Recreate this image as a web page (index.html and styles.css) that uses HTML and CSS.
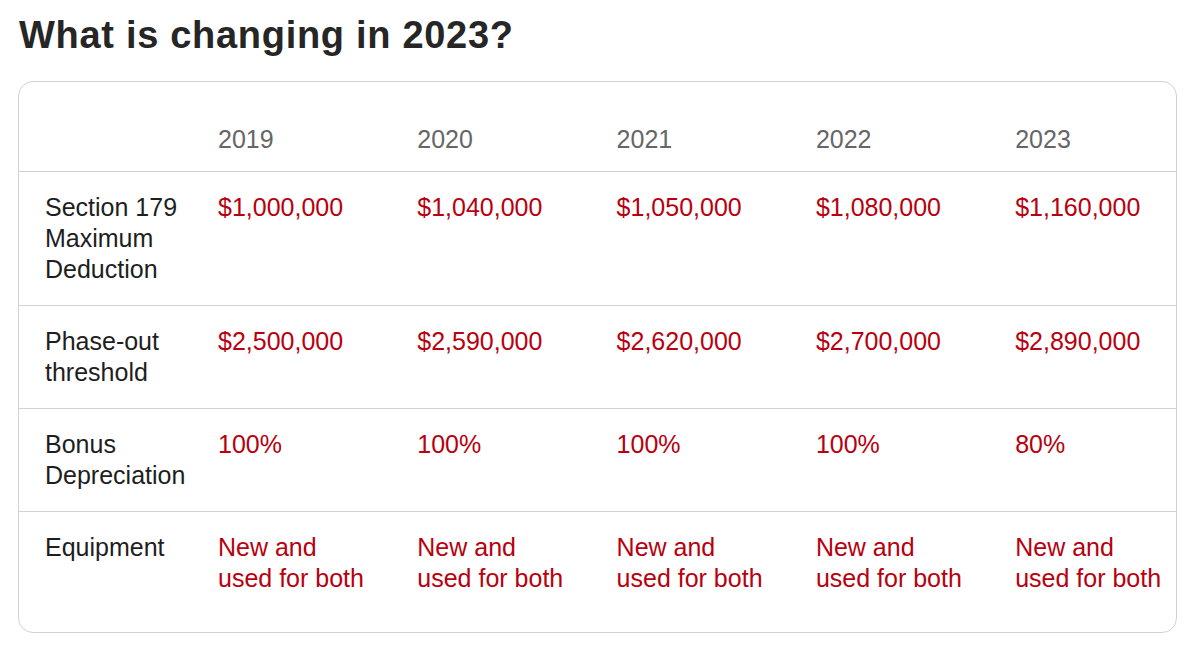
FILE: index.html
```html
<!DOCTYPE html>
<html lang="en">
<head>
<meta charset="utf-8">
<title>What is changing in 2023?</title>
<link rel="stylesheet" href="styles.css">
</head>
<body>
<main class="page">
  <h1 class="title">What is changing in 2023?</h1>
  <div class="card">
    <div class="row head">
      <div class="cell label"></div>
      <div class="cell year">2019</div>
      <div class="cell year">2020</div>
      <div class="cell year">2021</div>
      <div class="cell year">2022</div>
      <div class="cell year">2023</div>
    </div>
    <div class="row">
      <div class="cell label">Section 179<br>Maximum<br>Deduction</div>
      <div class="cell value">$1,000,000</div>
      <div class="cell value">$1,040,000</div>
      <div class="cell value">$1,050,000</div>
      <div class="cell value">$1,080,000</div>
      <div class="cell value">$1,160,000</div>
    </div>
    <div class="row">
      <div class="cell label">Phase-out<br>threshold</div>
      <div class="cell value">$2,500,000</div>
      <div class="cell value">$2,590,000</div>
      <div class="cell value">$2,620,000</div>
      <div class="cell value">$2,700,000</div>
      <div class="cell value">$2,890,000</div>
    </div>
    <div class="row">
      <div class="cell label">Bonus<br>Depreciation</div>
      <div class="cell value">100%</div>
      <div class="cell value">100%</div>
      <div class="cell value">100%</div>
      <div class="cell value">100%</div>
      <div class="cell value">80%</div>
    </div>
    <div class="row last">
      <div class="cell label">Equipment</div>
      <div class="cell value">New and<br>used for both</div>
      <div class="cell value">New and<br>used for both</div>
      <div class="cell value">New and<br>used for both</div>
      <div class="cell value">New and<br>used for both</div>
      <div class="cell value">New and<br>used for both</div>
    </div>
  </div>
</main>
</body>
</html>
```
FILE: styles.css
```css
html, body {
  margin: 0;
  padding: 0;
  background: #ffffff;
}

body {
  font-family: "Liberation Sans", Arial, Helvetica, sans-serif;
  color: #222222;
}

.page {
  padding: 12px 23px 0 18px;
}

.title {
  margin: 0 0 23px 1px;
  font-size: 38px;
  line-height: 46px;
  font-weight: 700;
  letter-spacing: 0.7px;
  color: #262626;
}

.card {
  border: 1px solid #d2d2d2;
  border-radius: 15px;
  padding-bottom: 18px;
}

.row {
  display: grid;
  grid-template-columns: 173px 199.3px 199.3px 199.3px 199.3px 1fr;
  padding-left: 26px;
  border-bottom: 1px solid #d2d2d2;
  font-size: 25px;
  line-height: 31px;
}

.row.last {
  border-bottom: none;
}

.cell {
  padding: 20px 0 20px 0;
}

.head .cell {
  padding: 42px 0 16px 0;
}

.label {
  color: #1e1e1e;
}

.year {
  color: #666666;
}

.value {
  color: #b8000f;
}
```
